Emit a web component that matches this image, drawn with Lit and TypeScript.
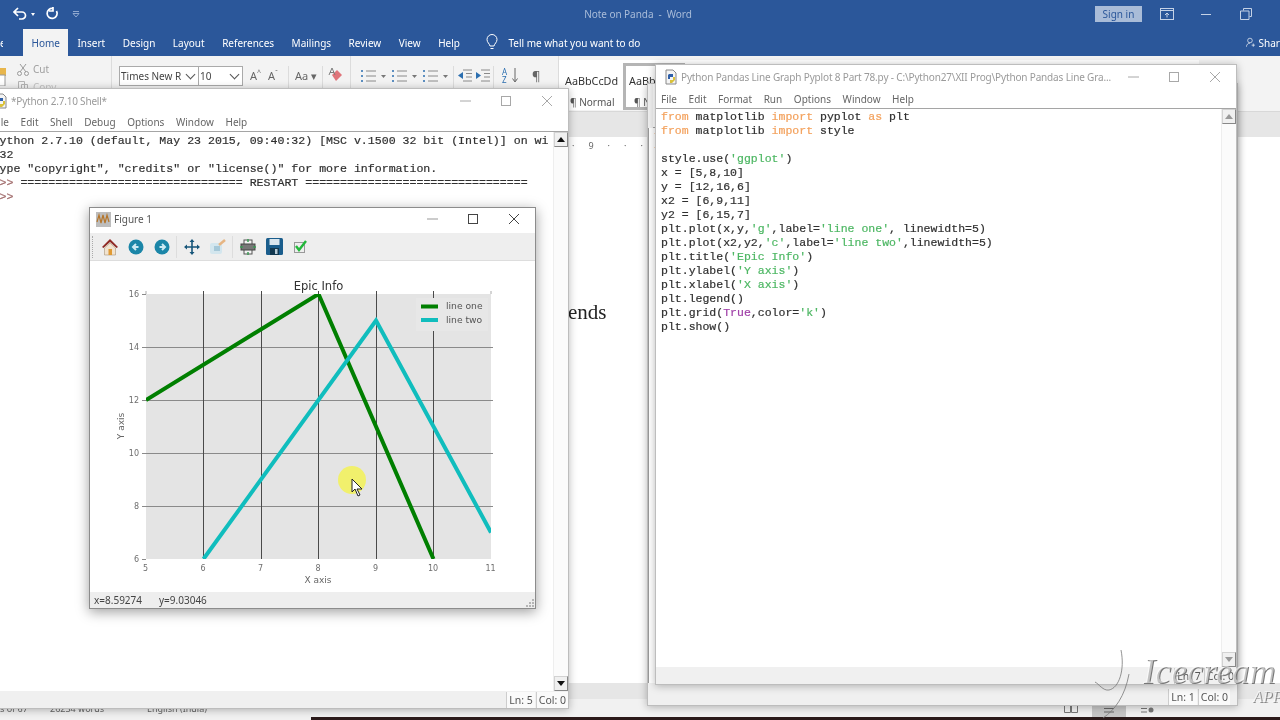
import { LitElement, css, html, svg } from "lit";
import { customElement } from "lit/decorators.js";

type Tok = [string, string?];

const EDITOR_CODE: Tok[][] = [
  [["from", "k"], [" matplotlib "], ["import", "k"], [" pyplot "], ["as", "k"], [" plt"]],
  [["from", "k"], [" matplotlib "], ["import", "k"], [" style"]],
  [],
  [["style.use("], ["'ggplot'", "s"], [")"]],
  [["x = [5,8,10]"]],
  [["y = [12,16,6]"]],
  [["x2 = [6,9,11]"]],
  [["y2 = [6,15,7]"]],
  [["plt.plot(x,y,"], ["'g'", "s"], [",label="], ["'line one'", "s"], [", linewidth=5)"]],
  [["plt.plot(x2,y2,"], ["'c'", "s"], [",label="], ["'line two'", "s"], [",linewidth=5)"]],
  [["plt.title("], ["'Epic Info'", "s"], [")"]],
  [["plt.ylabel("], ["'Y axis'", "s"], [")"]],
  [["plt.xlabel("], ["'X axis'", "s"], [")"]],
  [["plt.legend()"]],
  [["plt.grid("], ["True", "b"], [",color="], ["'k'", "s"], [")"]],
  [["plt.show()"]],
];

const SHELL_CODE: Tok[][] = [
  [["Python 2.7.10 (default, May 23 2015, 09:40:32) [MSC v.1500 32 bit (Intel)] on wi"]],
  [["n32"]],
  [["Type \"copyright\", \"credits\" or \"license()\" for more information."]],
  [[">>> ", "p"], ["================================ RESTART ================================"]],
  [[">>> ", "p"]],
];

const sx = (x: number) => 146 + (x - 5) * 57.5;
const sy = (y: number) => 558 - (y - 6) * 26.5;
const pts = (xs: number[], ys: number[]) => xs.map((x, i) => `${sx(x)},${sy(ys[i])}`).join(" ");

const winButtons = () => html`
  <div class="wbtns">
    <svg width="41" height="12" viewBox="0 0 41 12"><path d="M15 6h11" /></svg>
    <svg width="41" height="12" viewBox="0 0 41 12"><rect x="15.5" y="1.5" width="9" height="9" /></svg>
    <svg width="41" height="12" viewBox="0 0 41 12"><path d="M15 1l10 10M25 1L15 11" /></svg>
  </div>
`;

const pyIcon = () => html`
  <svg class="ico" width="16" height="16" viewBox="0 0 16 16">
    <path d="M3 1h7l3 3v11H3z" fill="#f4f4f4" stroke="#888" />
    <path d="M6 5h4v3H7v2H5V6z" fill="#2f5fa8" />
    <path d="M10 8h2v3l-3 3H7v-3h3z" fill="#d9c13a" />
  </svg>
`;

const code = (lines: Tok[][]) =>
  lines.map(
    (l) => html`<div class="ln">${l.map(([t, c]) => html`<span class=${c ?? ""}>${t}</span>`)}</div>`,
  );

const scrollbar = () => html`
  <div class="vbar">
    <div class="sbtn"><svg width="8" height="5" viewBox="0 0 8 5"><path d="M4 0l4 5H0z" /></svg></div>
    <div class="sbtn"><svg width="8" height="5" viewBox="0 0 8 5"><path d="M0 0h8L4 5z" /></svg></div>
  </div>
`;

@customElement("app-root")
export class AppRoot extends LitElement {
  private renderChart() {
    const xt = [5, 6, 7, 8, 9, 10, 11];
    const yt = [6, 8, 10, 12, 14, 16];
    return html`
      <svg class="chart" viewBox="90 260 445 331" width="445" height="331">
        <rect x="146" y="293" width="345" height="265" fill="#e4e4e4" />
        ${yt.map(
          (y) => svg`
            <line x1="142" x2="${y === 6 || y === 16 ? 146 : 493}" y1=${Math.floor(sy(y)) + 0.5} y2=${Math.floor(sy(y)) + 0.5} stroke="#8a8a8a" />
            <text class="tick" x="139" y=${sy(y) + 3} text-anchor="end">${y}</text>`,
        )}
        ${xt.map(
          (x) => svg`
            ${x > 5 && x < 11
              ? svg`<line x1=${Math.floor(sx(x)) + 0.5} x2=${Math.floor(sx(x)) + 0.5} y1="290" y2="558" stroke="#4a4a4a" />`
              : svg`<line x1=${sx(x)} x2=${sx(x)} y1="290" y2="293" stroke="#aaa" />`}
            <text class="tick" x=${sx(x) - 0.5} y="570" text-anchor="middle">${x}</text>`,
        )}
        <clipPath id="plot"><rect x="146" y="293" width="345" height="265" /></clipPath>
        <g clip-path="url(#plot)" fill="none" stroke-width="4" stroke-linejoin="miter">
          <polyline points=${pts([5, 8, 10], [12, 16, 6])} stroke="#007f00" />
          <polyline points=${pts([6, 9, 11], [6, 15, 7])} stroke="#10bdbd" />
        </g>
        <rect x="416" y="297" width="72" height="33" fill="#e7e7e7" />
        <line x1="421" x2="438" y1="305.5" y2="305.5" stroke="#007f00" stroke-width="4" />
        <line x1="421" x2="438" y1="319" y2="319" stroke="#10bdbd" stroke-width="4" />
        <text class="leg" x="446" y="308">line one</text>
        <text class="leg" x="446" y="321.5">line two</text>
        <text class="title" x="318.5" y="289" text-anchor="middle">Epic Info</text>
        <text class="axis" x="318" y="582" text-anchor="middle">X axis</text>
        <text class="axis" x="0" y="0" text-anchor="middle" transform="translate(124 425) rotate(-90)">Y axis</text>
      </svg>
    `;
  }

  private renderFigure() {
    return html`
      <div class="win figure">
        <div class="tbar">
          <svg class="ico" width="15" height="15" viewBox="0 0 15 15">
            <rect width="15" height="15" fill="#bdbdbd" />
            <path d="M1 10l2-7 2 8 2-8 2 8 2-8 2 7" fill="none" stroke="#b5762c" stroke-width="1.2" />
          </svg>
          <span class="ttext">Figure 1</span>
          ${winButtons()}
        </div>
        <div class="mpl-tools">
          <div class="grip"></div>
          <div class="tool">
            <svg width="18" height="18" viewBox="0 0 18 18">
              <path d="M9 1L1 9l1.5 1L9 4l6.5 6L17 9z" fill="#8f2a25" />
              <path d="M3.5 10L9 5l5.500 5v7h-11z" fill="#f1e3cf" stroke="#a89478" stroke-width=".6" />
              <rect x="7.500" y="11" width="3.500" height="6" fill="#e09a34" />
            </svg>
          </div>
          <div class="tool">
            <svg width="16" height="16" viewBox="0 0 16 16">
              <circle cx="8" cy="8" r="7.500" fill="#1b86a8" />
              <path d="M10.500 8H6M8 5L5 8l3 3" fill="none" stroke="#cdeaf3" stroke-width="2" />
            </svg>
          </div>
          <div class="tool">
            <svg width="16" height="16" viewBox="0 0 16 16">
              <circle cx="8" cy="8" r="7.500" fill="#1b86a8" />
              <path d="M5.500 8H10M8 5l3 3-3 3" fill="none" stroke="#cdeaf3" stroke-width="2" />
            </svg>
          </div>
          <div class="sep"></div>
          <div class="tool">
            <svg width="16" height="16" viewBox="0 0 16 16">
              <path d="M8 0l2.500 3h-5zM8 16l-2.500-3h5zM0 8l3-2.500v5zM16 8l-3 2.500v-5z" fill="#17567a" />
              <path d="M8 2v12M2 8h12" stroke="#17567a" stroke-width="1.600" />
            </svg>
          </div>
          <div class="tool">
            <svg width="18" height="16" viewBox="0 0 18 16">
              <rect x="1" y="4" width="12" height="11" rx="2" fill="#d3e6ee" />
              <rect x="5" y="7" width="6" height="5" fill="#a6c8d8" />
              <path d="M10 6l6-5" stroke="#e6b583" stroke-width="2.500" />
            </svg>
          </div>
          <div class="sep"></div>
          <div class="tool">
            <svg width="16" height="16" viewBox="0 0 16 16">
              <rect x="4" y="1" width="8" height="14" fill="#f4f4f4" stroke="#555" />
              <rect x="1" y="5" width="14" height="6" fill="#777" stroke="#444" />
              <path d="M8 0v3M8 13v3M0 8h3M13 8h3" stroke="#3d9a55" stroke-width="1.500" />
            </svg>
          </div>
          <div class="tool">
            <svg width="17" height="17" viewBox="0 0 17 17">
              <rect width="17" height="17" rx="1.500" fill="#1a5d8c" />
              <rect x="3.500" y="1" width="10" height="6" fill="#d9e6ee" />
              <rect x="4" y="10" width="9" height="7" fill="#12384f" />
              <rect x="9" y="11" width="2.500" height="5" fill="#b9cbd6" />
            </svg>
          </div>
          <div class="tool">
            <svg width="15" height="15" viewBox="0 0 15 15">
              <rect x="1.500" y="3.500" width="10" height="10" fill="#eee" stroke="#999" />
              <path d="M3 7l3 4 7-9" fill="none" stroke="#22b83a" stroke-width="2.400" />
            </svg>
          </div>
        </div>
        ${this.renderChart()}
        <div class="mpl-status">
          <span>x=8.59274</span><span>y=9.03046</span>
          <svg class="resize" width="9" height="9" viewBox="0 0 9 9">
            <path d="M7 1h2v2H7zM4 4h2v2H4zM7 4h2v2H7zM1 7h2v2H1zM4 7h2v2H4zM7 7h2v2H7z" fill="#b5b5b5" />
          </svg>
        </div>
      </div>
    `;
  }

  private renderWord() {
    const tabs = ["e", "Home", "Insert", "Design", "Layout", "References", "Mailings", "Review", "View", "Help"];
    return html`
      <div class="word">
        <div class="w-title">
          <div class="qat">
            <svg width="14" height="14" viewBox="0 0 14 14">
              <path d="M5 1L1 5l4 4M1.500 5H9a3.500 3.500 0 0 1 0 7H6" fill="none" stroke="#fff" stroke-width="1.700" />
            </svg>
            <span class="caret"></span>
            <svg width="14" height="14" viewBox="0 0 14 14">
              <path d="M8 1.500A5 5 0 1 0 11.500 4M8 0v4h-4" fill="none" stroke="#fff" stroke-width="1.700" />
            </svg>
            <svg class="qat-more" width="8" height="8" viewBox="0 0 8 8">
              <path d="M1 1.500h6M1 3.500h6L4 7z" fill="none" stroke="#8fa8cf" />
            </svg>
          </div>
          <div class="doc-name">Note on Panda &nbsp;-&nbsp; Word</div>
          <div class="w-right">
            <div class="signin">Sign in</div>
            <svg class="ribbon-opt" width="14" height="12" viewBox="0 0 14 12">
              <rect x=".5" y=".5" width="13" height="11" fill="none" stroke="#c5d2e6" />
              <path d="M1 2.500h12M7 9.500V5M5 7l2-2 2 2" fill="none" stroke="#c5d2e6" />
            </svg>
            <svg width="12" height="12" viewBox="0 0 12 12"><path d="M1 6.500h10" stroke="#c5d2e6" /></svg>
            <svg width="12" height="12" viewBox="0 0 12 12">
              <path d="M3.500 2.500v-2h8v8h-2M.5 3h8.500v8.500H.5z" fill="none" stroke="#c5d2e6" />
            </svg>
          </div>
        </div>
        <div class="w-tabs">
          ${tabs.map((t) => html`<div class="tab ${t === "Home" ? "on" : ""}">${t}</div>`)}
          <svg class="bulb" width="12" height="17" viewBox="0 0 12 17">
            <path d="M4 12C3.500 9.500 1 8.500 1 5.500a5 5 0 0 1 10 0c0 3-2.500 4-3 6.500zM4.500 14.500h3" fill="none" stroke="#fff" />
          </svg>
          <div class="tell">Tell me what you want to do</div>
          <div class="share">
            <svg width="16" height="15" viewBox="0 0 16 15">
              <circle cx="6" cy="4.500" r="3.500" fill="none" stroke="#fff" />
              <path d="M.5 14c.5-3.500 2.500-5.500 5.500-5.500M11 9v5M8.500 11.500h5" fill="none" stroke="#fff" />
            </svg>
            <span>Shar</span>
          </div>
        </div>
        <div class="ribbon">
          <div class="rb-clip">
            <svg class="paste" width="7" height="24" viewBox="0 0 7 24">
              <rect x="-4" y="6" width="10" height="8" fill="#e8b64c" />
              <rect x="-6" y="13" width="11" height="11" fill="#fff" stroke="#9a9a9a" />
            </svg>
            <div class="clip-rows">
              <div class="clip-row">
                <svg width="12" height="13" viewBox="0 0 12 13">
                  <path d="M3 1l6 8M9 1L3 9" stroke="#9a9a9a" fill="none" />
                  <circle cx="2.500" cy="10.500" r="2" fill="none" stroke="#9a9a9a" />
                  <circle cx="9.500" cy="10.500" r="2" fill="none" stroke="#9a9a9a" />
                </svg>
                <span>Cut</span>
              </div>
              <div class="clip-row">
                <svg width="12" height="13" viewBox="0 0 12 13">
                  <path d="M1.500.5h6v8h-6zM4.500 3.500h6v9h-6z" fill="none" stroke="#b5b5b5" />
                </svg>
                <span>Copy</span>
              </div>
            </div>
          </div>
          <div class="rb-font">
            <div class="combo f-name"><span>Times New R</span><i></i></div>
            <div class="combo f-size"><span>10</span><i></i></div>
            <span class="rt w1">A<sup>^</sup></span>
            <span class="rt w2">A<sup>ˇ</sup></span>
            <span class="vsep"></span>
            <span class="rt w3">Aa ▾</span>
            <span class="vsep"></span>
            <svg class="eraser" width="14" height="17" viewBox="0 0 14 17">
              <path d="M4 8l5-5 5 5-6 6z" fill="#e0747a" />
              <path d="M1 8l3-7 3 7M2 5.500h4" fill="none" stroke="#7c7c7c" />
            </svg>
          </div>
          <div class="rb-para">
            ${[0, 1, 2].map(
              () => html`
                <svg class="lst" width="28" height="14" viewBox="0 0 28 14">
                  <path d="M1 2h2M1 7h2M1 12h2" stroke="#2c6fb0" stroke-width="1.500" />
                  <path d="M6 2h10M6 7h10M6 12h10" stroke="#8a8a8a" />
                  <path d="M21 6h5l-2.500 3z" fill="#777" />
                </svg>
              `,
            )}
            <span class="vsep"></span>
            <svg width="15" height="14" viewBox="0 0 15 14">
              <path d="M6 1h9M9 4.500h6M9 8h6M6 12h9" stroke="#8a8a8a" />
              <path d="M6 3v7L1 6.500z" fill="#2c6fb0" />
            </svg>
            <svg width="15" height="14" viewBox="0 0 15 14">
              <path d="M6 1h9M9 4.500h6M9 8h6M6 12h9" stroke="#8a8a8a" />
              <path d="M1 3v7l5-3.500z" fill="#2c6fb0" />
            </svg>
            <span class="vsep"></span>
            <span class="rt sort">A<br />Z</span>
            <svg class="sort-arrow" width="6" height="15" viewBox="0 0 6 15">
              <path d="M3 0v13M.5 10.500L3 14l2.500-3.500" fill="none" stroke="#666" />
            </svg>
            <span class="rt pil">¶</span>
          </div>
          <div class="rb-styles">
            <div class="sty"><b>AaBbCcDd</b><span>¶ Normal</span></div>
            <div class="sty sel"><b>AaBb</b><span>¶ No</span></div>
          </div>
        </div>
        <div class="w-gap"></div>
        <div class="ruler"><span>·</span><span>9</span><span>·</span><span>·</span><span>·</span></div>
        <div class="doc"><span>ends</span></div>
        <div class="hbar"></div>
        <div class="w-status">
          <span class="st1">s of 67</span>
          <span class="st2">26234 words</span>
          <span class="st3">English (India)</span>
          <div class="views">
            <svg width="14" height="9" viewBox="0 0 14 9"><path d="M.5.5h6v8h-6zM7.500.5h6v8h-6z" fill="none" stroke="#777" /></svg>
            <div class="view-on">
              <svg width="12" height="9" viewBox="0 0 12 9"><path d="M1 1h10M1 4.500h10M1 8h10" stroke="#666" /></svg>
            </div>
            <svg width="14" height="9" viewBox="0 0 14 9"><path d="M1 1h8M1 4.500h6M1 8h6" stroke="#777" /><circle cx="11" cy="6" r="2.500" fill="#777" /></svg>
          </div>
        </div>
        <div class="w-bottom"></div>
      </div>
    `;
  }

  private renderShell() {
    return html`
      <div class="win shell">
        <div class="tbar">
          ${pyIcon()}
          <span class="ttext">*Python 2.7.10 Shell*</span>
          ${winButtons()}
        </div>
        <div class="menu">
          ${["File", "Edit", "Shell", "Debug", "Options", "Window", "Help"].map((m) => html`<span>${m}</span>`)}
        </div>
        <div class="pane">
          <div class="code">${code(SHELL_CODE)}</div>
          ${scrollbar()}
        </div>
        <div class="idle-status"><span>Ln: 5</span><span>Col: 0</span></div>
      </div>
    `;
  }

  private renderEditors() {
    return html`
      <div class="win back">
        <div class="menu"></div>
        <div class="pane">
          <div class="code">${code(EDITOR_CODE.slice(0, 2))}</div>
        </div>
        <div class="idle-status"><span>Ln: 1</span><span>Col: 0</span></div>
      </div>
      <div class="win editor">
        <div class="tbar">
          ${pyIcon()}
          <span class="ttext">Python Pandas Line Graph Pyplot 8 Part 78.py - C:\\Python27\\XII Prog\\Python Pandas Line Gra...</span>
          ${winButtons()}
        </div>
        <div class="menu">
          ${["File", "Edit", "Format", "Run", "Options", "Window", "Help"].map((m) => html`<span>${m}</span>`)}
        </div>
        <div class="pane">
          <div class="code">${code(EDITOR_CODE)}</div>
          ${scrollbar()}
        </div>
        <div class="idle-status"><span>Ln: 7</span><span>Col: 0</span></div>
      </div>
    `;
  }

  render() {
    return html`
      <div class="desk">
        ${this.renderWord()} ${this.renderEditors()} ${this.renderShell()} ${this.renderFigure()}
        <div class="halo"></div>
        <svg class="pointer" width="13" height="19" viewBox="0 0 13 19">
          <path d="M1 1v13l3-3 3 7 2-1-3-6h5z" fill="#fff" stroke="#222" />
        </svg>
        <div class="mark">
          <svg width="60" height="72" viewBox="0 0 60 72">
            <path d="M26 2c4 20-2 38-12 40C8 43 4 36 0 34M34 26C30 48 20 62 8 70" fill="none" stroke="#777" stroke-width=".8" />
          </svg>
          <span class="mark-name">Icecream</span>
          <span class="mark-apps">APPS</span>
        </div>
      </div>
    `;
  }

  static styles = css`
    :host {
      display: block;
      width: 1280px;
      height: 720px;
      overflow: hidden;
      font-family: "Noto Sans", "Open Sans", sans-serif;
    }

    .desk {
      position: relative;
      width: 1280px;
      height: 720px;
      overflow: hidden;
      filter: blur(0.35px);
    }

    /* word behind everything */
    .word {
      display: flex;
      flex-direction: column;
      height: 720px;
      background: #fff;
    }
    .w-title {
      display: flex;
      align-items: center;
      height: 28px;
      background: #2b579a;
      position: relative;
    }
    .qat {
      display: flex;
      align-items: center;
      gap: 4px;
      padding-left: 13px;
    }
    .caret {
      width: 0;
      height: 0;
      border: 2px solid transparent;
      border-top: 3px solid #fff;
      margin: 2px 6px 0 0;
    }
    .qat-more {
      margin-left: 9px;
    }
    .doc-name {
      flex: 1;
      text-align: center;
      color: #a9bcd9;
      font-size: 10px;
      letter-spacing: -0.05px;
    }
    .w-right {
      display: flex;
      align-items: center;
      gap: 28px;
      padding-right: 28px;
      margin-left: -101px;
    }
    .ribbon-opt {
      margin-right: -2px;
    }
    .signin {
      background: #a9bcd8;
      color: #2b579a;
      font-size: 10px;
      width: 47px;
      line-height: 16px;
      text-align: center;
      margin-right: -10px;
    }
    .w-tabs {
      display: flex;
      align-items: stretch;
      height: 28px;
      background: #2b579a;
      color: #fff;
      font-size: 10px;
      line-height: 28px;
      gap: 0.5px;
      overflow: hidden;
    }
    .tab {
      padding: 0 8.5px;
      margin-top: 1px;
      white-space: nowrap;
    }
    .tab:first-child {
      padding: 0;
      width: 3px;
      overflow: hidden;
      margin-right: 19.5px;
    }
    .tab.on {
      background: #f3f3f3;
      color: #2b579a;
    }
    .bulb {
      align-self: center;
      margin: 1px 0 0 17px;
    }
    .tell {
      margin: 1px 0 0 10px;
      white-space: nowrap;
    }
    .share {
      display: flex;
      align-items: center;
      gap: 2px;
      margin: 1px 0 0 auto;
      width: 34px;
      flex: none;
      white-space: nowrap;
    }
    .ribbon {
      display: flex;
      height: 56px;
      background: #f3f3f3;
      border-bottom: 1px solid #d8d8d8;
      box-sizing: border-box;
      color: #666;
      font-size: 10px;
    }
    .rb-clip {
      display: flex;
      align-items: flex-start;
      gap: 10px;
      width: 112px;
      padding-top: 6px;
      box-sizing: border-box;
      border-right: 1px solid #dcdcdc;
      color: #a0a0a0;
      flex: none;
    }
    .clip-rows {
      display: flex;
      flex-direction: column;
      gap: 4px;
    }
    .clip-row {
      display: flex;
      align-items: center;
      gap: 4px;
    }
    .clip-row + .clip-row {
      color: #c4c4c4;
    }
    .rb-font {
      display: flex;
      align-items: flex-start;
      width: 239px;
      padding: 10px 0 0 7px;
      box-sizing: border-box;
      border-right: 1px solid #dcdcdc;
      flex: none;
    }
    .combo {
      display: flex;
      align-items: center;
      justify-content: space-between;
      height: 20px;
      box-sizing: border-box;
      border: 1px solid #aaa;
      background: #fff;
      padding: 0 1px;
      color: #444;
      white-space: nowrap;
    }
    .combo i {
      width: 6px;
      height: 6px;
      border: solid #555;
      border-width: 0 1px 1px 0;
      transform: rotate(45deg);
      margin: -3px 3px 0 0;
    }
    .f-name {
      width: 80px;
    }
    .f-size {
      width: 44px;
      border-left: none;
    }
    .rt {
      color: #666;
      line-height: 20px;
      font-size: 11px;
    }
    .rt sup {
      font-size: 7px;
      line-height: 0;
    }
    .w1 {
      margin-left: 7px;
      width: 18px;
    }
    .w2 {
      width: 20px;
    }
    .w3 {
      width: 27px;
      margin-left: 6px;
    }
    .vsep {
      width: 1px;
      height: 22px;
      background: #dcdcdc;
      flex: none;
    }
    .eraser {
      margin: 1px 0 0 5px;
    }
    .rb-para {
      display: flex;
      align-items: flex-start;
      gap: 3px;
      width: 208px;
      padding: 13px 0 0 9px;
      box-sizing: border-box;
      border-right: 1px solid #dcdcdc;
      flex: none;
    }
    .rb-para .vsep {
      margin-top: -3px;
    }
    .sort {
      font-size: 8px;
      line-height: 8px;
      color: #2c6fb0;
      width: 7px;
      margin-left: 5px;
      margin-top: -1px;
    }
    .sort-arrow {
      margin-top: -1px;
    }
    .pil {
      margin: -3px 0 0 11px;
      font-size: 13px;
    }
    .rb-styles {
      display: flex;
      align-items: flex-start;
      margin-top: 4px;
      height: 50px;
      background: #fff;
      width: 640px;
    }
    .sty {
      display: flex;
      flex-direction: column;
      width: 64px;
      padding: 13px 0 0 6px;
      box-sizing: border-box;
      color: #333;
      font-size: 10px;
      white-space: nowrap;
    }
    .sty b {
      font-weight: 400;
      font-size: 10.8px;
    }
    .sty span {
      margin: 7px 0 0 5px;
      color: #555;
    }
    .sty.sel {
      border: 3px solid #b5b5b5;
      margin-top: 3px;
      height: 47px;
      padding: 7px 0 0 3px;
      width: 62px;
      overflow: hidden;
    }
    .w-gap {
      height: 25px;
      background: #e6e6e6;
    }
    .ruler {
      display: flex;
      gap: 14px;
      height: 15px;
      background: #fff;
      padding-left: 572px;
      font-size: 9px;
      line-height: 17px;
      color: #666;
    }
    .doc {
      flex: 1;
      padding: 148px 0 0 568px;
      font-family: "Liberation Serif", serif;
      font-size: 21px;
      line-height: 24px;
      color: #222;
    }
    .hbar {
      height: 16px;
      background: #e6e6e6;
    }
    .w-status {
      display: flex;
      align-items: center;
      height: 18px;
      background: #f1f1f1;
      font-size: 9px;
      color: #666;
    }
    .st1 {
      width: 50px;
    }
    .st2 {
      width: 97px;
    }
    .views {
      display: flex;
      align-items: center;
      gap: 14px;
      margin-left: 857px;
    }
    .view-on {
      display: flex;
      align-items: center;
      justify-content: center;
      width: 34px;
      height: 18px;
      background: #c6c6c6;
    }
    .w-bottom {
      height: 3px;
      background: linear-gradient(to right, #f1f1f1 311px, #2b1a1a 311px);
    }

    /* desktop windows */
    .win {
      position: absolute;
      display: flex;
      flex-direction: column;
      box-sizing: border-box;
      background: #fff;
      box-shadow: 0 1px 8px rgba(0, 0, 0, 0.28);
      border: 1px solid #bdbdbd;
    }
    .shell {
      left: -12px;
      top: 88px;
      width: 581px;
      height: 621px;
    }
    .back {
      left: 647px;
      top: 83px;
      width: 591px;
      height: 623px;
      background: #f0f0f0;
    }
    .editor {
      left: 655px;
      top: 64px;
      width: 582px;
      height: 621px;
    }
    .figure {
      left: 89px;
      top: 207px;
      width: 447px;
      height: 402px;
      border-color: #8c8c8c;
      box-shadow: 0 3px 12px rgba(0, 0, 0, 0.38);
    }
    .tbar {
      display: flex;
      align-items: center;
      height: 24px;
      flex: none;
      padding: 0 0 1px 7px;
      box-sizing: border-box;
      color: #9a9a9a;
      font-size: 10px;
      white-space: nowrap;
    }
    .editor .tbar {
      height: 25px;
      padding-bottom: 2px;
      letter-spacing: -0.16px;
    }
    .ico {
      flex: none;
      margin-right: 2px;
    }
    .shell .tbar {
      padding-left: 4px;
      letter-spacing: -0.2px;
    }
    .ttext {
      flex: 1;
      overflow: hidden;
    }
    .wbtns {
      display: flex;
      flex: none;
    }
    .wbtns svg {
      fill: none;
      stroke: #a8a8a8;
    }
    .figure .tbar {
      color: #555;
      height: 25px;
      padding: 0 0 3px 6px;
    }
    .figure .ico {
      margin-right: 3px;
    }
    .figure .wbtns svg {
      stroke: #444;
    }
    .figure .wbtns svg:first-child {
      stroke: #999;
    }
    .menu {
      display: flex;
      gap: 11.6px;
      height: 18px;
      flex: none;
      padding-left: 5px;
      font-size: 10px;
      line-height: 18px;
      color: #666;
      border-bottom: 1px solid #a5a5a5;
    }
    .shell .menu {
      padding-left: 4px;
    }
    .pane {
      display: flex;
      flex: 1;
      min-height: 0;
      overflow: hidden;
    }
    .code {
      flex: 1;
      min-width: 0;
      padding: 1px 0 0 5px;
      font-family: "Liberation Mono", monospace;
      font-size: 11.53px;
      line-height: 14px;
      color: #303030;
      white-space: pre;
      overflow: hidden;
    }
    .ln {
      height: 14px;
      -webkit-text-stroke: 0.2px #303030;
    }
    .k {
      color: #f3a15c;
      -webkit-text-stroke: 0.2px #f3a15c;
    }
    .s {
      color: #4db763;
      -webkit-text-stroke: 0.2px #4db763;
    }
    .b {
      color: #a040a8;
      -webkit-text-stroke: 0.2px #a040a8;
    }
    .p {
      color: #a06a6a;
      -webkit-text-stroke: 0.2px #a06a6a;
    }
    .shell .code {
      padding: 2px 0 0 3.6px;
      font-size: 11.58px;
    }
    .vbar {
      display: flex;
      flex-direction: column;
      justify-content: space-between;
      width: 15px;
      flex: none;
      background: #fbfbfb;
      border-left: 1px solid #eee;
      box-sizing: border-box;
    }
    .sbtn {
      display: flex;
      align-items: center;
      justify-content: center;
      height: 15px;
      background: #f0f0f0;
      border: 1px solid #d2d2d2;
      border-right-color: #888;
      border-bottom-color: #888;
      box-sizing: border-box;
    }
    .shell .sbtn svg {
      fill: #111;
    }
    .editor .sbtn svg {
      fill: #999;
    }
    .idle-status {
      display: flex;
      justify-content: flex-end;
      align-items: center;
      height: 17px;
      flex: none;
      background: #f0f0f0;
      font-size: 10.5px;
      color: #555;
      box-sizing: border-box;
    }
    .idle-status span {
      border: solid #cdcdcd;
      border-width: 0 0 0 1px;
      padding: 0 2px;
      line-height: 16px;
      background: #fafafa;
      margin-left: 1px;
    }
    .editor .idle-status span {
      background: transparent;
    }
    .back .menu {
      height: 44px;
      box-sizing: border-box;
      margin-left: 5px;
      background: #fff;
    }
    .back .pane {
      background: #fff;
      border-left: 1px solid #999;
    }
    .back .idle-status {
      height: 22px;
      padding-right: 7px;
      align-items: flex-end;
    }

    /* matplotlib figure */
    .mpl-tools {
      display: flex;
      align-items: center;
      height: 28px;
      flex: none;
      background: #eee;
      border-bottom: 1px solid #ddd;
      padding-left: 2px;
      box-sizing: border-box;
    }
    .grip {
      width: 1px;
      height: 22px;
      margin-right: 3px;
      border-left: 1px dotted #aaa;
    }
    .tool {
      display: flex;
      align-items: center;
      justify-content: center;
      width: 26px;
      flex: none;
    }
    .sep {
      width: 1px;
      height: 22px;
      background: #ddd;
      margin: 0 2px 0 1px;
    }
    .chart {
      display: block;
      flex: none;
    }
    .tick {
      font: 8px "DejaVu Sans", sans-serif;
      fill: #6e6e6e;
    }
    .leg {
      font: 9.2px "DejaVu Sans", sans-serif;
      fill: #555;
    }
    .title {
      font: 11.5px "DejaVu Sans", sans-serif;
      fill: #333;
    }
    .axis {
      font: 9px "DejaVu Sans", sans-serif;
      fill: #666;
    }
    .mpl-status {
      position: relative;
      display: flex;
      align-items: center;
      gap: 17px;
      flex: 1;
      background: #eee;
      padding-left: 4px;
      font-size: 10px;
      color: #444;
    }
    .resize {
      position: absolute;
      right: 1px;
      bottom: 1px;
    }

    /* overlays */
    .halo {
      position: absolute;
      left: 338px;
      top: 466px;
      width: 28px;
      height: 28px;
      border-radius: 50%;
      background: #f1f06c;
    }
    .pointer {
      position: absolute;
      left: 351px;
      top: 478px;
    }
    .mark {
      position: absolute;
      left: 1095px;
      top: 648px;
      width: 185px;
      height: 72px;
    }
    .mark svg {
      position: absolute;
      left: 0;
      top: 0;
    }
    .mark-name {
      position: absolute;
      left: 48px;
      top: 2px;
      font: italic 36px "Liberation Serif", serif;
      color: rgba(255, 255, 255, 0.55);
      text-shadow: 1px 1px 0 #777;
      white-space: nowrap;
    }
    .mark-apps {
      position: absolute;
      left: 158px;
      top: 40px;
      font: italic 16px "Liberation Serif", serif;
      color: rgba(255, 255, 255, 0.6);
      text-shadow: 1px 1px 0 #888;
    }
  `;
}
